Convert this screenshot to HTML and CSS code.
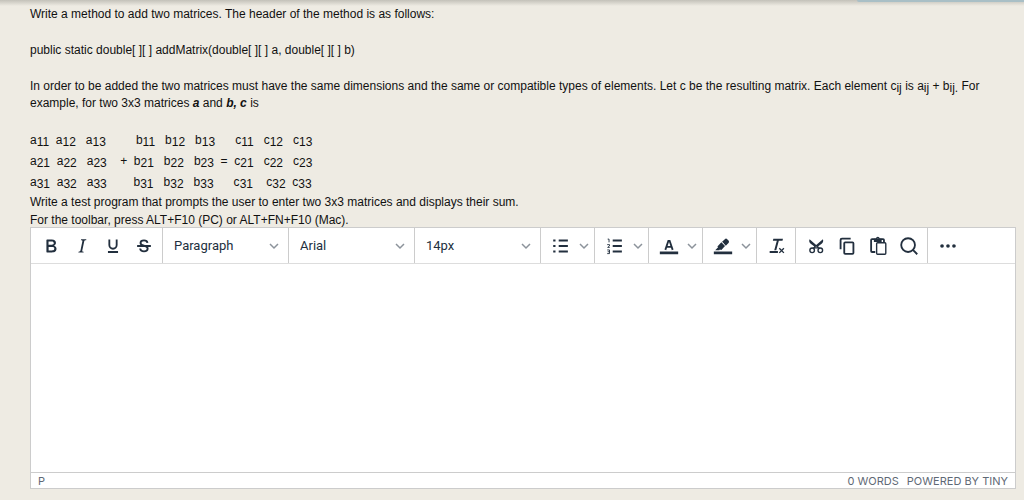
FILE: index.html
```
<!DOCTYPE html>
<html lang="en">
<head>
<meta charset="UTF-8">
<meta name="viewport" content="width=device-width, initial-scale=1.0">
<title>Add two matrices</title>
<link rel="stylesheet" href="styles.css">
</head>
<body>
  <div class="top-shadow"><div class="top-tab"></div></div>
  <main class="question">
    <p>Write a method to add two matrices. The header of the method is as follows:</p>
    <p>public static double[ ][ ] addMatrix(double[ ][ ] a, double[ ][ ] b)</p>
    <p class="task">In order to be added the two matrices must have the same dimensions and the same or compatible types of elements. Let c be the resulting matrix. Each element c<sub>ij</sub> is a<sub>ij</sub> + b<sub>ij.</sub> For example, for two 3x3 matrices <b><i>a</i></b> and <b><i>b, c</i></b> is</p>
    <div class="matrix">
      <div>a<sub>11</sub>&nbsp; a<sub>12</sub>&nbsp;&nbsp; a<sub>13</sub>&nbsp;&nbsp;&nbsp;&nbsp;&nbsp;&nbsp;&nbsp;&nbsp; b<sub>11</sub>&nbsp;&nbsp; b<sub>12</sub>&nbsp;&nbsp; b<sub>13</sub>&nbsp;&nbsp;&nbsp;&nbsp;&nbsp; c<sub>11</sub>&nbsp;&nbsp; c<sub>12</sub>&nbsp;&nbsp; c<sub>13</sub></div>
      <div>a<sub>21</sub>&nbsp; a<sub>22</sub>&nbsp;&nbsp; a<sub>23</sub>&nbsp;&nbsp;&nbsp; +&nbsp; b<sub>21</sub>&nbsp;&nbsp; b<sub>22</sub>&nbsp;&nbsp; b<sub>23</sub>&nbsp; =&nbsp; c<sub>21</sub>&nbsp;&nbsp; c<sub>22</sub>&nbsp;&nbsp; c<sub>23</sub></div>
      <div>a<sub>31</sub>&nbsp; a<sub>32</sub>&nbsp;&nbsp; a<sub>33</sub>&nbsp;&nbsp;&nbsp;&nbsp;&nbsp;&nbsp;&nbsp; b<sub>31</sub>&nbsp;&nbsp; b<sub>32</sub>&nbsp;&nbsp; b<sub>33</sub>&nbsp;&nbsp;&nbsp;&nbsp;&nbsp; c<sub>31</sub>&nbsp;&nbsp;&nbsp; c<sub>32</sub>&nbsp; c<sub>33</sub></div>
    </div>
    <div>Write a test program that prompts the user to enter two 3x3 matrices and displays their sum.</div>
    <label class="hint" for="answer">For the toolbar, press ALT+F10 (PC) or ALT+FN+F10 (Mac).</label>

    <div class="editor">
      <div class="toolbar" role="toolbar">
        <div class="group">
          <button type="button" aria-label="Bold"><svg viewBox="0 0 24 24"><path fill-rule="evenodd" d="M7.800 19c-.3 0-.5 0-.6-.2l-.2-.5V5.700c0-.2 0-.4.2-.5l.6-.2h5c1.500 0 2.700.3 3.500 1 .7.600 1.100 1.400 1.100 2.500a3 3 0 0 1-.6 1.900c-.4.600-1 1-1.600 1.200.4.100.9.300 1.300.6s.8.700 1 1.200c.4.400.5 1 .5 1.600 0 1.300-.4 2.300-1.300 3-.8.700-2.100 1-3.800 1H7.800Zm5-8.300c.6 0 1.200-.1 1.600-.5.4-.3.600-.7.600-1.300 0-1.100-.8-1.700-2.300-1.700H9.300v3.500h3.400Zm.5 6c.7 0 1.300-.1 1.700-.4.4-.4.600-.9.600-1.500s-.2-1-.7-1.400c-.4-.3-1-.4-2-.4H9.400v3.800h4Z"/></svg></button>
          <button type="button" aria-label="Italic"><svg viewBox="0 0 24 24"><path d="m16.700 4.700-.1.900h-.300c-.600 0-1 0-1.400.300-.300.300-.400.600-.500 1.100l-2.100 9.800v.600c0 .500.400.800 1.400.800h.200l-.200.800H8l.200-.800h.200c1.100 0 1.800-.500 2-1.500l2-9.800.1-.500c0-.600-.400-.800-1.400-.800h-.300l.2-.900h5.700Z"/></svg></button>
          <button type="button" aria-label="Underline"><svg viewBox="0 0 24 24"><path class="line" d="M8 5v6a4 4 0 0 0 8 0V5M6.500 18.500h11"/></svg></button>
          <button type="button" aria-label="Strikethrough"><svg viewBox="0 0 24 24"><path class="line" d="M15.800 8.500C15.500 6.600 14 5.800 12 5.800c-2.300 0-3.800 1.100-3.800 2.800 0 1.600 1.300 2.300 3.800 2.900 2.800.7 4 1.500 4 3.300s-1.600 3.100-4 3.100c-2.500 0-4-1.100-4.200-3.200M4.500 12h15"/></svg></button>
        </div>
        <div class="group select-group">
          <select aria-label="Block format"><option>Paragraph</option><option>Heading 1</option></select>
          <svg class="chevron" viewBox="0 0 10 10"><path d="M1 3l4 4 4-4"/></svg>
        </div>
        <div class="group select-group">
          <select aria-label="Font"><option>Arial</option><option>Georgia</option></select>
          <svg class="chevron" viewBox="0 0 10 10"><path d="M1 3l4 4 4-4"/></svg>
        </div>
        <div class="group select-group">
          <select aria-label="Font size"><option>14px</option><option>16px</option></select>
          <svg class="chevron" viewBox="0 0 10 10"><path d="M1 3l4 4 4-4"/></svg>
        </div>
        <div class="group">
          <button type="button" aria-label="Bullet list"><svg viewBox="0 0 24 24"><path class="line" d="M9.500 6H19.500M9.500 12H19.500M9.500 18H19.500"/><path d="M3.500 4.800h2.500v2.400H3.500zM3.500 10.800h2.500v2.400H3.500zM3.500 16.800h2.500v2.400H3.500z"/></svg></button>
          <button type="button" class="drop" aria-label="Bullet styles"><svg class="chevron" viewBox="0 0 10 10"><path d="M1 3l4 4 4-4"/></svg></button>
        </div>
        <div class="group">
          <button type="button" aria-label="Numbered list"><svg viewBox="0 0 24 24"><path class="line" d="M9.500 6H19.500M9.500 12H19.500M9.500 18H19.500"/><path class="thin" d="M4 4.500H5.500V8M3.500 10.500h2.500v1.400L4 13.500h2.300M3.500 16.300h2.500v4H3.500M4 18.300h2"/></svg></button>
          <button type="button" class="drop" aria-label="Number styles"><svg class="chevron" viewBox="0 0 10 10"><path d="M1 3l4 4 4-4"/></svg></button>
        </div>
        <div class="group">
          <button type="button" aria-label="Text color"><svg viewBox="0 0 24 24"><path d="M2 18h20v3H2z"/><path class="line" d="M8 16.200 11.300 6.500h1.400L16 16.200M9.300 13h5.400"/></svg></button>
          <button type="button" class="drop" aria-label="Text colors"><svg class="chevron" viewBox="0 0 10 10"><path d="M1 3l4 4 4-4"/></svg></button>
        </div>
        <div class="group">
          <button type="button" aria-label="Highlight"><svg viewBox="0 0 24 24"><path d="M2 18h20v3H2z"/><path fill-rule="evenodd" d="M8 16.700H3.500l3.100-3.300-.7-.8L10.200 8l4 4.100-4 4.200c-.2.200-.6.200-.8 0l-.6-.7-.8 1.100Zm5-7.300L11 7.400l3-2.900a2 2 0 0 1 2.600 0L18 6c.7.700.7 2 0 2.700l-2.900 2.900-1.800-1.800-.3-.4"/></svg></button>
          <button type="button" class="drop" aria-label="Highlight colors"><svg class="chevron" viewBox="0 0 10 10"><path d="M1 3l4 4 4-4"/></svg></button>
        </div>
        <div class="group">
          <button type="button" aria-label="Clear formatting"><svg viewBox="0 0 24 24"><path d="M14 6.200 11.200 16.500H9l2.800-10.300H7.500L8 4.200h10.500L18 6.200h-4ZM4 17.500h9v2H4z"/><path class="mid" d="m14.500 14.500 5 5m0-5-5 5"/></svg></button>
        </div>
        <div class="group">
          <button type="button" aria-label="Cut"><svg viewBox="0 0 24 24"><path d="M5 4.500 12.200 11 19.500 4.500c.8 2 .3 3.600-1.700 5.200l-4 3h-3.200l-4-3c-2-1.600-2.500-3.200-1.600-5.200Z"/><path class="mid" d="M8.500 14h7.500M11 12l-1.500 3M13.500 12l1.500 3"/><circle class="mid" cx="7.800" cy="16.700" r="2.500"/><circle class="mid" cx="16.700" cy="16.700" r="2.500"/></svg></button>
          <button type="button" aria-label="Copy"><svg viewBox="0 0 24 24"><path class="line" d="M5 15.500V5.500c0-.8.700-1.500 1.500-1.500H16"/><rect class="line" x="9" y="8" width="10" height="12.500" rx="1"/></svg></button>
          <button type="button" aria-label="Paste"><svg viewBox="0 0 24 24"><path class="line" d="M9 18.500H5.500a1 1 0 0 1-1-1v-12a1 1 0 0 1 1-1h12a1 1 0 0 1 1 1V8"/><rect class="mid" x="10.500" y="8.500" width="10" height="12.500" rx="1"/><path fill-rule="evenodd" d="M7.500 7.500V4h2.300a2 2 0 0 1 4 0H16v3.500H7.500Zm4.300-4.300a.9.900 0 1 0 0 1.800.9.900 0 0 0 0-1.800Z"/></svg></button>
          <button type="button" aria-label="Find and replace"><svg viewBox="0 0 24 24"><circle class="line" cx="11" cy="11" r="7.500"/><path class="line" d="m16 16 5 5"/></svg></button>
        </div>
        <div class="group">
          <button type="button" aria-label="More"><svg viewBox="0 0 24 24"><circle cx="5.500" cy="12" r="2"/><circle cx="12" cy="12" r="2"/><circle cx="18.500" cy="12" r="2"/></svg></button>
        </div>
      </div>
      <textarea id="answer"></textarea>
      <div class="statusbar">
        <span>P</span>
        <span class="words">0 WORDS</span>
        <a href="#">POWERED BY TINY</a>
      </div>
    </div>
  </main>
</body>
</html>
```
FILE: styles.css
```
* {
  box-sizing: border-box;
}

body {
  margin: 0;
  background-color: #eeebe3;
  color: #111;
  font-family: "Liberation Sans", Arial, sans-serif;
  font-size: 12px;
  line-height: 18px;
}

.top-shadow {
  height: 6px;
  background: linear-gradient(#c3c1b9, #eeebe3);
}

.top-tab {
  width: 167px;
  height: 2px;
  margin-left: auto;
  background-color: #a9bfc6;
  border-bottom-left-radius: 2px;
}

.question {
  padding: 0 8px 11px 30px;
}

.question p {
  margin: 0 0 19px;
  line-height: 17px;
}

.question .task {
  margin-bottom: 18px;
}

sub {
  font-size: 12px;
  line-height: 0;
  vertical-align: -2px;
}

.matrix {
  line-height: 21px;
}

.hint {
  display: block;
  height: 16px;
}

.editor {
  border: 1px solid #ccc;
  background-color: #fff;
  color: #222f3e;
}

.toolbar {
  display: flex;
  border-bottom: 1px solid #ddd;
}

.group {
  display: flex;
  align-items: center;
  height: 35px;
  padding: 0 3px 0 4px;
  border-right: 1px solid #ccc;
}

.group:last-child {
  border-right: none;
}

.toolbar button {
  display: flex;
  align-items: center;
  justify-content: center;
  width: 31px;
  height: 31px;
  padding: 0;
  border: none;
  background: none;
}

.toolbar .drop {
  width: 15px;
}

.toolbar svg {
  width: 22px;
  height: 22px;
  fill: #222f3e;
}

.toolbar .line {
  fill: none;
  stroke: #222f3e;
  stroke-width: 2;
}

.toolbar .mid {
  fill: none;
  stroke: #222f3e;
  stroke-width: 1.5;
}

.toolbar .thin {
  fill: none;
  stroke: #222f3e;
  stroke-width: 1;
}

.toolbar .chevron {
  flex-shrink: 0;
  width: 10px;
  height: 10px;
  fill: none;
  stroke: #8c939b;
  stroke-width: 1.5;
}

.select-group {
  position: relative;
  width: 126px;
  padding: 0;
}

.select-group select {
  appearance: none;
  width: 100%;
  height: 31px;
  padding: 0 24px 0 11px;
  border: none;
  background: none;
  color: #222f3e;
  font-family: Roboto, sans-serif;
  font-size: 13px;
}

.select-group .chevron {
  position: absolute;
  right: 9px;
  pointer-events: none;
}

textarea {
  display: block;
  width: 100%;
  height: 208px;
  padding: 8px;
  border: none;
  outline: none;
  resize: none;
  font-family: "Liberation Sans", Arial, sans-serif;
  font-size: 14px;
}

.statusbar {
  display: flex;
  gap: 8px;
  height: 16px;
  padding: 0 7px;
  border-top: 1px solid #ccc;
  color: #5f6975;
  font-family: Inter, sans-serif;
  font-size: 11px;
  line-height: 16px;
}

.words {
  margin-left: auto;
}

.statusbar a {
  color: #5f6975;
  text-decoration: none;
}
```
